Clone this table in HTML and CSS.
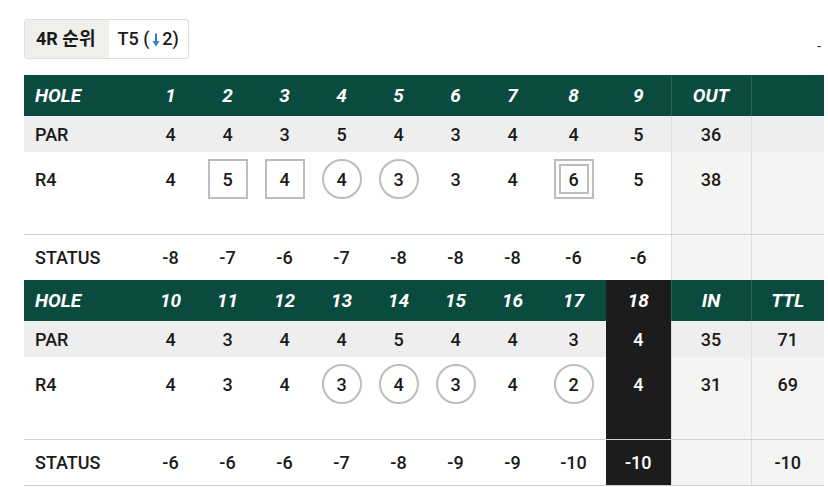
FILE: index.html
```html
<!DOCTYPE html>
<html lang="ko">
<head>
<meta charset="utf-8">
<title>Scorecard</title>
<link rel="stylesheet" href="styles.css">
</head>
<body>
<div class="wrap">
  <div class="top">
    <div class="badge">
      <span class="badge-label">4R 순위</span>
      <span class="badge-value">T5 (<svg class="arrow" width="8" height="14" viewBox="0 0 8 14"><path d="M4 0.5V10" stroke="#2f7fd6" stroke-width="2" fill="none"/><path d="M0.5 8L4 13.5L7.5 8Z" fill="#2f7fd6"/></svg>2)</span>
    </div>
    <span class="dash">-</span>
  </div>
  <table class="score">
    <colgroup>
      <col class="c-label"><col class="c-hole"><col class="c-hole"><col class="c-hole"><col class="c-hole"><col class="c-hole"><col class="c-hole"><col class="c-hole"><col class="c-wide"><col class="c-wide"><col class="c-sum"><col class="c-ttl">
    </colgroup>
    <tbody>
      <tr class="head">
        <th class="lbl">HOLE</th><th>1</th><th>2</th><th>3</th><th>4</th><th>5</th><th>6</th><th>7</th><th>8</th><th>9</th><th class="sum">OUT</th><th class="sum"></th>
      </tr>
      <tr class="par">
        <td class="lbl">PAR</td><td>4</td><td>4</td><td>3</td><td>5</td><td>4</td><td>3</td><td>4</td><td>4</td><td>5</td><td class="sum">36</td><td class="sum"></td>
      </tr>
      <tr class="r4">
        <td class="lbl"><span class="n">R4</span></td><td><span class="n">4</span></td><td><span class="n sq">5</span></td><td><span class="n sq">4</span></td><td><span class="n ci">4</span></td><td><span class="n ci">3</span></td><td><span class="n">3</span></td><td><span class="n">4</span></td><td><span class="n dsq"><span class="inner">6</span></span></td><td><span class="n">5</span></td><td class="sum"><span class="n">38</span></td><td class="sum"></td>
      </tr>
      <tr class="status">
        <td class="lbl">STATUS</td><td>-8</td><td>-7</td><td>-6</td><td>-7</td><td>-8</td><td>-8</td><td>-8</td><td>-6</td><td>-6</td><td class="sum"></td><td class="sum"></td>
      </tr>
      <tr class="head">
        <th class="lbl">HOLE</th><th>10</th><th>11</th><th>12</th><th>13</th><th>14</th><th>15</th><th>16</th><th>17</th><th class="cur">18</th><th class="sum">IN</th><th class="sum">TTL</th>
      </tr>
      <tr class="par">
        <td class="lbl">PAR</td><td>4</td><td>3</td><td>4</td><td>4</td><td>5</td><td>4</td><td>4</td><td>3</td><td class="cur">4</td><td class="sum">35</td><td class="sum">71</td>
      </tr>
      <tr class="r4">
        <td class="lbl"><span class="n">R4</span></td><td><span class="n">4</span></td><td><span class="n">3</span></td><td><span class="n">4</span></td><td><span class="n ci">3</span></td><td><span class="n ci">4</span></td><td><span class="n ci">3</span></td><td><span class="n">4</span></td><td><span class="n ci">2</span></td><td class="cur"><span class="n">4</span></td><td class="sum"><span class="n">31</span></td><td class="sum"><span class="n">69</span></td>
      </tr>
      <tr class="status last">
        <td class="lbl">STATUS</td><td>-6</td><td>-6</td><td>-6</td><td>-7</td><td>-8</td><td>-9</td><td>-9</td><td>-10</td><td class="cur">-10</td><td class="sum"></td><td class="sum">-10</td>
      </tr>
    </tbody>
  </table>
</div>
</body>
</html>
```

FILE: styles.css
```css
html, body {
  margin: 0;
  padding: 0;
  background: #ffffff;
}

body {
  font-family: Roboto, "Noto Sans CJK KR", sans-serif;
  color: #1a1a1a;
}

.wrap {
  width: 800px;
  padding: 19px 0 0 24px;
}

.top {
  display: flex;
  justify-content: space-between;
  align-items: flex-start;
  margin-bottom: 16px;
}

.badge {
  display: flex;
  height: 40px;
  box-sizing: border-box;
  border: 1px solid #dcdcdc;
  border-radius: 3px;
  overflow: hidden;
  font-size: 18px;
  line-height: 38px;
}

.badge-label {
  background: #efefec;
  padding: 0 14px 0 11px;
  font-weight: 700;
}

.badge-value {
  padding: 0 9px 0 8px;
  font-weight: 500;
  display: flex;
  align-items: center;
}

.arrow {
  margin: 1px 2px 0 3px;
}

.dash {
  font-size: 14px;
  line-height: 20px;
  margin-top: 17px;
  margin-right: 3px;
  color: #333;
}

.score {
  width: 800px;
  border-collapse: collapse;
  table-layout: fixed;
  font-size: 18px;
  font-weight: 500;
}

.c-label { width: 118px; }
.c-hole { width: 57px; }
.c-wide { width: 65px; }
.c-sum { width: 80px; }
.c-ttl { width: 73px; }

.score th,
.score td {
  padding: 0;
  text-align: center;
}

.score .lbl {
  text-align: left;
  padding-left: 11px;
}

.head th {
  height: 41px;
  background: #0b4a3e;
  color: #ffffff;
  font-size: 19px;
  font-weight: 700;
  font-style: italic;
}

.head th.sum {
  border-left: 1px solid #2c6357;
}

.par td {
  height: 36px;
  background: #eeeeee;
}

.r4 td {
  height: 75px;
  padding-top: 7px;
  vertical-align: top;
  border-bottom: 1px solid #d2d2d2;
}

.status td {
  height: 45px;
}

.status.last td {
  border-bottom: 1px solid #cfcfcf;
}

.r4 td.sum,
.status td.sum {
  background: #f4f4f2;
}

td.sum {
  border-left: 1px solid #dedede;
}

.score .cur {
  background: #1c1c1c;
  color: #ffffff;
}

.n {
  display: inline-flex;
  align-items: center;
  justify-content: center;
  height: 40px;
  box-sizing: border-box;
}

.sq,
.ci,
.dsq {
  width: 40px;
  border: 2px solid #bdbdbd;
}

.ci {
  border-radius: 50%;
}

.dsq .inner {
  display: flex;
  align-items: center;
  justify-content: center;
  width: 30px;
  height: 30px;
  box-sizing: border-box;
  border: 2px solid #bdbdbd;
}
```
